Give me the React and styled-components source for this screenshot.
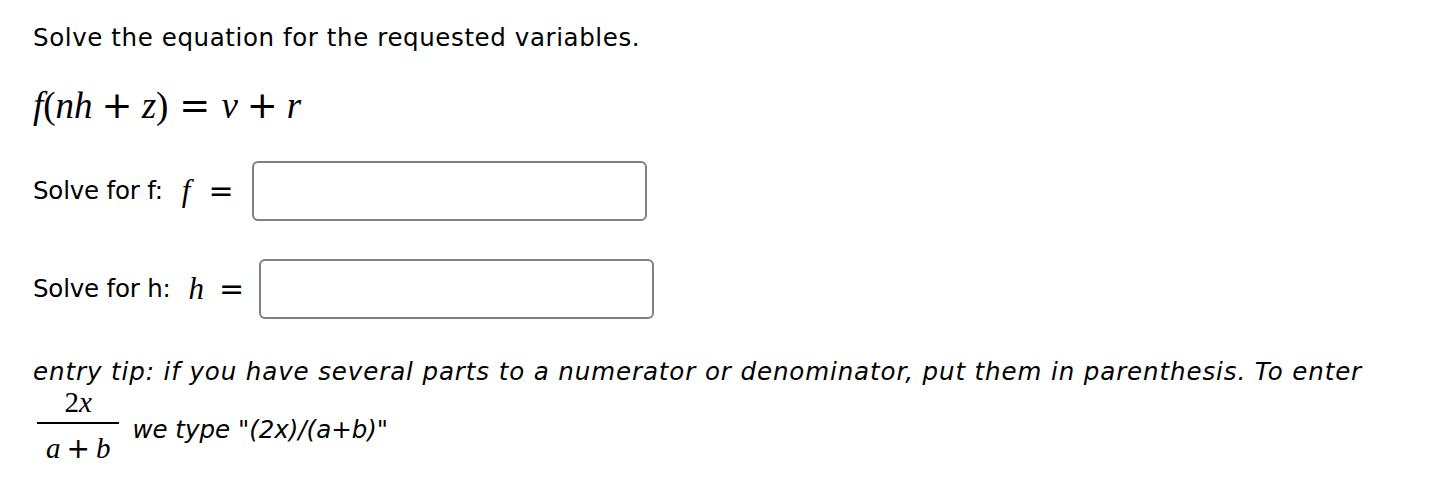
import React from "react";
import styled, { createGlobalStyle } from "styled-components";

const Global = createGlobalStyle`
  html, body { margin: 0; padding: 0; background: #fff; }
  body { font-family: "DejaVu Sans", Verdana, sans-serif; color: #000; }
`;

const Page = styled.div`
  padding: 22px 33px 0 33px;
  display: flex;
  flex-direction: column;
  font-size: 24.5px;
  font-family: "DejaVu Sans", sans-serif;
  letter-spacing: -0.2px;
`;

const Title = styled.p`
  margin: 0;
  line-height: 32px;
  letter-spacing: 0.6px;
`;

const Equation = styled.div`
  margin-top: 30px;
  height: 44px;
  display: flex;
  align-items: baseline;
`;

const V = styled.span`
  font-family: "Liberation Serif", "DejaVu Serif", serif;
  font-style: italic;
  font-size: ${(p) => p.$size || 30}px;
  letter-spacing: 0;
`;

const Paren = styled.span`
  font-family: "Liberation Serif", "DejaVu Serif", serif;
  font-style: normal;
  font-size: ${(p) => p.$size || 30}px;
  letter-spacing: 0;
`;

const Op = styled.span`
  font-family: "DejaVu Sans", sans-serif;
  font-weight: 400;
  font-style: normal;
  font-size: ${(p) => p.$size || 30}px;
  margin: 0 ${(p) => p.$gap || 0}px;
  letter-spacing: 0;
`;

const Row = styled.div`
  display: flex;
  align-items: center;
  margin-top: ${(p) => p.$mt}px;
`;

const MathGroup = styled.span`
  display: inline-flex;
  align-items: baseline;
`;

const Label = styled.span`
  line-height: 32px;
  margin-right: ${(p) => p.$gap}px;
`;

const Input = styled.input`
  box-sizing: border-box;
  width: 395px;
  height: 60px;
  border: 2px solid #808080;
  border-radius: 6px;
  margin: 0;
  background: #fff;
  font-size: 20px;
  outline: none;
`;

const Tip = styled.div`
  margin-top: 38px;
  font-style: italic;
`;

const TipLine = styled.div`
  line-height: 30px;
  letter-spacing: 0.9px;
`;

const FracRow = styled.div`
  display: flex;
  align-items: center;
`;

const Frac = styled.span`
  display: inline-flex;
  flex-direction: column;
  align-items: center;
  margin: 0 13px 0 4px;
  font-style: normal;
`;

const Num = styled.span`
  padding: 0 4px 3px;
  line-height: 30px;
`;

const Den = styled.span`
  border-top: 2px solid #000;
  padding: 9px 9px 0;
  line-height: 30px;
  align-self: stretch;
  text-align: center;
`;

const TipText = styled.span`
  letter-spacing: 0;
  margin-top: 6px;
`;

export default function App() {
  const eq = 37;
  return (
    <>
      <Global />
      <Page>
        <Title>Solve the equation for the requested variables.</Title>
        <Equation>
          <V $size={eq}>f</V>
          <Paren $size={eq}>(</Paren>
          <V $size={eq}>nh</V>
          <Op $size={eq} $gap={9}>+</Op>
          <V $size={eq}>z</V>
          <Paren $size={eq}>)</Paren>
          <Op $size={eq} $gap={11}>=</Op>
          <V $size={eq}>v</V>
          <Op $size={eq} $gap={9}>+</Op>
          <V $size={eq}>r</V>
        </Equation>
        <Row $mt={33}>
          <Label $gap={19}>Solve for f:</Label>
          <MathGroup>
            <V $size={31}>f</V>
            <Op $size={30} $gap={18}>=</Op>
          </MathGroup>
          <Input aria-label="f" />
        </Row>
        <Row $mt={38}>
          <Label $gap={18}>Solve for h:</Label>
          <MathGroup>
            <V $size={31}>h</V>
            <Op $size={30} $gap={15}>=</Op>
          </MathGroup>
          <Input aria-label="h" />
        </Row>
        <Tip>
          <TipLine>
            entry tip: if you have several parts to a numerator or denominator, put them in parenthesis. To enter
          </TipLine>
          <FracRow>
            <Frac>
              <Num>
                <Paren $size={29}>2</Paren>
                <V $size={29}>x</V>
              </Num>
              <Den>
                <V $size={29}>a</V>
                <Op $size={28} $gap={6}>+</Op>
                <V $size={29}>b</V>
              </Den>
            </Frac>
            <TipText>we type "(2x)/(a+b)"</TipText>
          </FracRow>
        </Tip>
      </Page>
    </>
  );
}
